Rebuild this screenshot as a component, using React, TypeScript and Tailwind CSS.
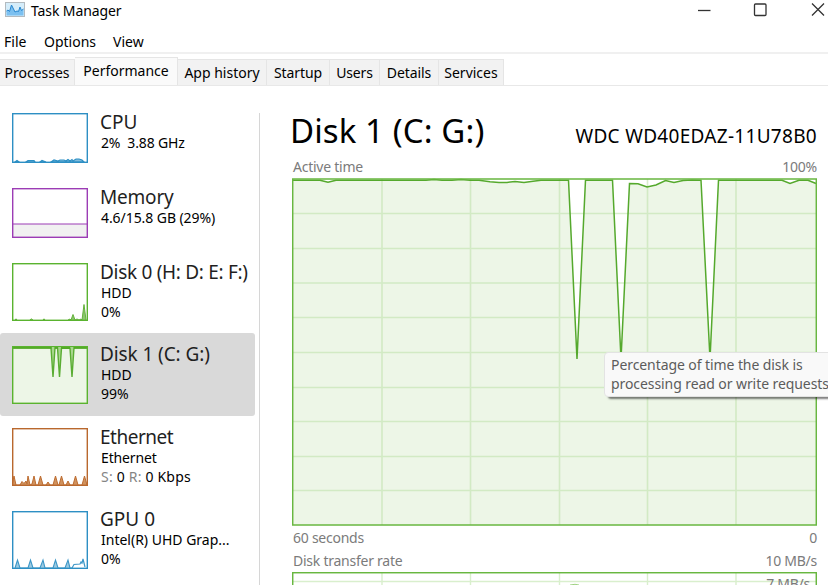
import { clsx } from 'clsx'
import type { ReactNode } from 'react'

interface Resource {
  title: string
  titleClass: string
  lines: ReactNode[]
  color: string
  height: number
  rowClass: string
  chart: ReactNode
}

interface Tab {
  label: string
  className: string
}

const TABS: Tab[] = [
  { label: 'Processes', className: 'w-[75px]' },
  { label: 'Performance', className: 'w-[103px]' },
  { label: 'App history', className: 'w-[89px]' },
  { label: 'Startup', className: 'w-[63px] tracking-[-0.1px]' },
  { label: 'Users', className: 'w-[50px] tracking-[-0.2px]' },
  { label: 'Details', className: 'w-[59px] tracking-[-0.1px]' },
  { label: 'Services', className: 'w-[65px]' }
]

// Points are in chart pixels, origin at the inner top-left corner
const ACTIVE_TIME =
  '0,2.2 28,2.2 36,4.2 44,2.2 134,2.2 142,1.4 150,2.2 160,2.2 169,1.4 178,2.2 187,2.2 198,3.8 207,4.5 215,4.5 223,3.4 232,4.5 241,3.2 249,2.2 276.5,2.2 285,181 293.5,2.2 320.5,2.2 329,181 337.5,5.5 346,5.7 355,9 364,7 373.5,2.5 382,4.5 391,2.6 400,2 409,2.2 418,181 426.5,2.2 490,2.2 498,5.5 507,2.2 516,2.2 524,5.5'

const RESOURCES: Resource[] = [
  {
    title: 'CPU',
    titleClass: '',
    lines: [<span className="tracking-[-0.15px]">2%  3.88 GHz</span>],
    color: '#2d8fc4',
    height: 50,
    rowClass: 'h-[75px]',
    chart: (
      <path
        d="M3 49L5 47.500 7 49ZM14 49L16 47.500H22L23 49ZM28 49L30 47.500 34 49ZM39 49L42 47 46 48 48 47H52L54 48 56 46.500 58 48 60 46.500 61 48 64 46 67 46 70 47 72 49Z"
        fill="#7fbbdc"
        stroke="#2d8fc4"
        strokeWidth="1.2"
      />
    )
  },
  {
    title: 'Memory',
    titleClass: 'tracking-[-0.2px]',
    lines: [<span className="tracking-[-0.07px]">4.6/15.8 GB (29%)</span>],
    color: '#9c3cb5',
    height: 50,
    rowClass: 'h-[75px]',
    chart: <path d="M0 36H76V50H0Z" fill="#f1f1f1" stroke="#9c3cb5" strokeWidth="1.2" />
  },
  {
    title: 'Disk 0 (H: D: E: F:)',
    titleClass: 'tracking-[-0.3px]',
    lines: ['HDD', '0%'],
    color: '#5ab32f',
    height: 58,
    rowClass: 'h-[83px]',
    chart: (
      <path
        d="M3 57l1-1.2 1 1.2M18 57l1-1.2 2 1.2M31 57l1-1.2 1 1.2M56 57l2-1 1 1 2-5.5 2 5.5 2-1 2 1 2-1 1 1 2-15.500 2 15.500"
        fill="#8cc76f"
        stroke="#63b13c"
        strokeWidth="1"
      />
    )
  },
  {
    title: 'Disk 1 (C: G:)',
    titleClass: '-mt-px tracking-[-0.1px]',
    lines: ['HDD', '99%'],
    color: '#5ab32f',
    height: 58,
    rowClass: 'h-[83px]',
    chart: (
      <>
        <path d="M0 0H76V58H0Z" fill="#edf6e7" />
        <path
          d="M0 1.700H39L41 31 43 1.700H45.500L47.500 31 49.500 2.200H58L60 31 62 1.700H76"
          fill="#a9d78e"
          stroke="#5aad33"
          strokeWidth="1.4"
        />
        <path d="M0 1.500H39.500M43 1.500H46M49 1.500H58M62 1.500H76" stroke="#4fa622" strokeWidth="2.4" />
      </>
    )
  },
  {
    title: 'Ethernet',
    titleClass: 'tracking-[-0.5px]',
    lines: [
      <span className="tracking-[-0.15px]">Ethernet</span>,
      <span className="tracking-[0.2px]">
        <span className="text-[#858585]">S:</span> 0 <span className="text-[#858585]">R:</span> 0 Kbps
      </span>
    ],
    color: '#b9682d',
    height: 58,
    rowClass: '-mt-px h-[83px]',
    chart: (
      <path
        d="M0 57L2 48 4 57H8L10 53.500 12 55.500 14 53 15 56 16 48 18 57 20 56 22 48 24 57H26L28.500 48 31 57H34L36 54 38 57H41L43.500 48 46 57 47 57 49.500 48 52 57H54L56 53 58 57H61L63.500 48 66 57H70L72.500 48 75 57"
        fill="#d0935f"
        stroke="#bd6c30"
        strokeWidth="1"
      />
    )
  },
  {
    title: 'GPU 0',
    titleClass: '-mt-px',
    lines: ['Intel(R) UHD Grap...', '0%'],
    color: '#2d8fc4',
    height: 58,
    rowClass: 'h-[83px]',
    chart: (
      <>
        <path
          d="M3 57L5.500 49 8 57H16L18.500 49 21 57H28L31 49 33 57H41L43.500 49 46 57H53L56 49 58 57"
          fill="#9dcbe2"
          stroke="#3d97c8"
          strokeWidth="1.1"
        />
        <path d="M58 57H60L62 53.500 68 53 69 51 70 52 71 48 73 56" fill="none" stroke="#3d97c8" strokeWidth="1.2" />
      </>
    )
  }
]

function AppIcon() {
  return (
    <svg width="20" height="15" viewBox="0 0 20 15">
      <rect x="0.5" y="0.5" width="19" height="14" fill="#d5edfa" stroke="#b3babf" />
      <path
        d="M1.500 13.500V9L3 8 4.500 9.500 6.500 3 8.500 7 10 10 12 9 13.500 9.500 15 5 16.500 8.500 18.500 7V13.500Z"
        fill="#7cc0f0"
      />
      <path
        d="M1.500 9L3 8 4.500 9.500 6.500 3 8.500 7 10 10 12 9 13.500 9.500 15 5 16.500 8.500 18.500 7"
        fill="none"
        stroke="#2886cf"
      />
    </svg>
  )
}

function TitleBar() {
  return (
    <header className="flex h-6 shrink-0 items-start pl-[5px]">
      <div className="mt-[2px]">
        <AppIcon />
      </div>
      <span className="ml-[6px] text-[14px] leading-[21px] tracking-[-0.1px]">Task Manager</span>
      <svg className="ml-auto" width="131" height="20" viewBox="0 0 131 20" fill="none" stroke="#333" strokeWidth="1.3">
        <path d="M1 10.500H13.500" />
        <rect x="57.500" y="4" width="11.500" height="11.500" rx="1" />
        <path d="M115 3.500L127 15.500M127 3.500L115 15.500" />
      </svg>
    </header>
  )
}

function ResourceRow({ resource, selected }: { resource: Resource; selected: boolean }) {
  return (
    <li
      className={clsx(
        'flex w-[255px] items-start rounded-[3px] pl-3',
        resource.rowClass,
        selected && 'bg-[#d9d9d9]'
      )}
    >
      <svg
        className="mt-[13px] shrink-0"
        width="76"
        height={resource.height}
        viewBox={`0 0 76 ${resource.height}`}
      >
        <rect width="76" height={resource.height} fill="#fff" />
        {resource.chart}
        <rect
          x="0.700"
          y="0.700"
          width="74.600"
          height={resource.height - 1.4}
          fill="none"
          stroke={resource.color}
          strokeWidth="1.4"
        />
      </svg>
      <div className="ml-3 pt-[11px] whitespace-pre">
        <div className={clsx('text-[19px] leading-[22px] text-[#1f1f1f]', resource.titleClass)}>
          {resource.title}
        </div>
        {resource.lines.map((line, i) => (
          <div key={i} className="ml-px text-[14px] leading-[19px]">
            {line}
          </div>
        ))}
      </div>
    </li>
  )
}

function ActiveTimeChart() {
  return (
    <svg className="block" width="525" height="348" viewBox="0 0 525 348">
      <path d={`M${ACTIVE_TIME.split(' ').join('L')}V347H0Z`} fill="#edf6e7" />
      <path
        d="M90 1V347M178.500 1V347M267.500 1V347M355.500 1V347M444 1V347M1 35.500H524M1 70.500H524M1 105H524M1 139.500H524M1 174.500H524M1 209.500H524M1 243.500H524M1 278.500H524M1 312.500H524"
        stroke="#bfe2ad"
        strokeOpacity="0.6"
        strokeWidth="1.6"
      />
      <polyline points={ACTIVE_TIME} fill="none" stroke="#55a92d" strokeWidth="1.5" />
      <rect x="0.700" y="1" width="523.600" height="346" fill="none" stroke="#68b740" strokeWidth="1.5" />
    </svg>
  )
}

function App() {
  return (
    <div className="flex h-[585px] w-[828px] flex-col overflow-hidden bg-white font-['Noto_Sans',sans-serif] text-black">
      <TitleBar />
      <nav className="flex h-7 shrink-0 items-center pt-[7px] pl-1 text-[14px]">
        <span className="w-10">File</span>
        <span className="w-[69px]">Options</span>
        <span>View</span>
      </nav>
      <div className="mb-[3px] h-[2px] shrink-0 bg-[#f0f0f0]" />
      <nav className="flex h-[29px] shrink-0 items-end border-b border-[#e8e8e8] text-[14px] whitespace-nowrap">
        {TABS.map((tab) => {
          const active = tab.label === 'Performance'
          return (
            <span
              key={tab.label}
              className={clsx(
                'flex justify-center border-t border-r border-[#e5e5e5]',
                active ? 'h-[28px] bg-[#fafafa] pt-[2px]' : 'h-[26px] bg-[#f2f2f2] pt-[2px]',
                tab.className
              )}
            >
              {tab.label}
            </span>
          )
        })}
      </nav>

      <div className="flex min-h-0 flex-1">
        <aside className="w-[259px] shrink-0 pt-[14px]">
          <ul>
            {RESOURCES.map((resource) => (
              <ResourceRow
                key={resource.title}
                resource={resource}
                selected={resource.title.startsWith('Disk 1')}
              />
            ))}
          </ul>
        </aside>
        <div className="mt-[27px] w-px shrink-0 bg-[#d6d6d6]" />
        <main className="relative ml-8 w-[525px] shrink-0 pt-[20px] text-[14px] tracking-[-0.25px] whitespace-nowrap text-[#7b7b7b]">
          <div className="flex h-[50px] items-baseline justify-between text-black">
            <h1 className="-ml-[2px] text-[33px] leading-[50px] tracking-[0.1px]">Disk 1 (C: G:)</h1>
            <span className="text-[19px] leading-none tracking-[0.3px]">WDC WD40EDAZ-11U78B0</span>
          </div>
          <div className="flex h-[22px] justify-between pl-px leading-[22px]">
            <span>Active time</span>
            <span>100%</span>
          </div>
          <ActiveTimeChart />
          <div className="flex h-[22px] justify-between pl-px leading-[23px]">
            <span>60 seconds</span>
            <span>0</span>
          </div>
          <div className="flex h-6 justify-between pl-px leading-[26px]">
            <span>Disk transfer rate</span>
            <span>10 MB/s</span>
          </div>
          <div className="relative h-[13px] overflow-hidden">
            <svg width="525" height="20" viewBox="0 0 525 20" fill="none">
              <path
                d="M90 1V20M178.500 1V20M267.500 1V20M355.500 1V20M444 1V20M1 9.500H524"
                stroke="#d9efcd"
                strokeWidth="1.4"
              />
              <path d="M278 13L283 12.300 287 13" stroke="#9dd17f" />
              <rect x="0.700" y="0.700" width="523.600" height="30" stroke="#68b740" strokeWidth="1.5" />
            </svg>
            <span className="absolute top-[2px] right-[7px] leading-5">7 MB/s</span>
          </div>
          <div className="absolute top-[266px] left-[312px] rounded-[4px] border border-[#e3e3e3] bg-[#f9f9f9] pt-[2px] pr-4 pb-[3px] pl-[6px] leading-[19px] tracking-[-0.08px] text-[#5c5c5c] shadow-[3px_3px_2px_-1px_rgba(0,0,0,0.5)]">
            Percentage of time the disk is
            <br />
            processing read or write requests
          </div>
        </main>
      </div>
    </div>
  )
}

export default App
